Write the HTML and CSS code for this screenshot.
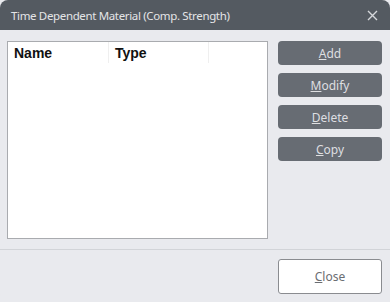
FILE: index.html
```html
<!DOCTYPE html>
<html>
<head>
<meta charset="utf-8">
<link rel="stylesheet" href="styles.css">
</head>
<body>
<div class="window">
  <div class="titlebar">
    <span class="title">Time Dependent Material (Comp. Strength)</span>
    <svg class="close-x" width="11" height="11" viewBox="0 0 11 11"><path d="M1 1L10 10M10 1L1 10" stroke="#d6d8db" stroke-width="1.4" fill="none"/></svg>
  </div>
  <div class="content">
    <div class="list">
      <div class="list-head">
        <div class="col col-name">Name</div>
        <div class="col col-type">Type</div>
      </div>
    </div>
    <div class="buttons">
      <button class="btn"><u>A</u>dd</button>
      <button class="btn"><u>M</u>odify</button>
      <button class="btn"><u>D</u>elete</button>
      <button class="btn"><u>C</u>opy</button>
    </div>
  </div>
  <div class="footer">
    <button class="close-btn"><u>C</u>lose</button>
  </div>
</div>
</body>
</html>
```
FILE: styles.css
```css
html, body {
  margin: 0;
  padding: 0;
  background: #e9eaee;
}
body {
  width: 390px;
  height: 302px;
  overflow: hidden;
  font-family: "Noto Sans", "Open Sans", sans-serif;
}
.window {
  width: 390px;
  height: 302px;
  background: #e9eaee;
  border-radius: 8px;
  overflow: hidden;
  display: flex;
  flex-direction: column;
}
.titlebar {
  height: 30px;
  background: #545a61;
  display: flex;
  align-items: center;
  justify-content: space-between;
  padding: 0 12px 0 11px;
  flex-shrink: 0;
}
.title {
  color: #e4e5e7;
  font-size: 11.5px;
  letter-spacing: -0.35px;
}
.content {
  display: flex;
  gap: 10px;
  padding: 11px 8px 0 7px;
}
.list {
  width: 259px;
  height: 196px;
  background: #ffffff;
  border: 1px solid #a9abaf;
}
.list-head {
  display: flex;
  height: 21px;
}
.col {
  font-family: "Liberation Sans", Arial, sans-serif;
  font-weight: bold;
  font-size: 14px;
  color: #111;
  padding: 3px 0 0 6px;
  box-sizing: border-box;
  border-right: 1px solid #efefef;
}
.col-name { width: 101px; }
.col-type { width: 100px; }
.buttons {
  display: flex;
  flex-direction: column;
  gap: 8px;
}
.btn {
  width: 104px;
  height: 24px;
  background: #676c73;
  border: none;
  border-radius: 4px;
  color: #dedfe1;
  font-family: "Noto Sans", "Open Sans", sans-serif;
  font-size: 12px;
  padding: 0;
}
.footer {
  margin-top: 10px;
  border-top: 1px solid #d2d4d8;
  display: flex;
  justify-content: flex-end;
  padding: 9px 8px 0 0;
}
.close-btn {
  width: 104px;
  height: 35px;
  background: #ffffff;
  border: 1px solid #8a8c90;
  border-radius: 3px;
  color: #6a6d72;
  font-family: "Noto Sans", "Open Sans", sans-serif;
  font-size: 12px;
  padding: 0;
}
```
